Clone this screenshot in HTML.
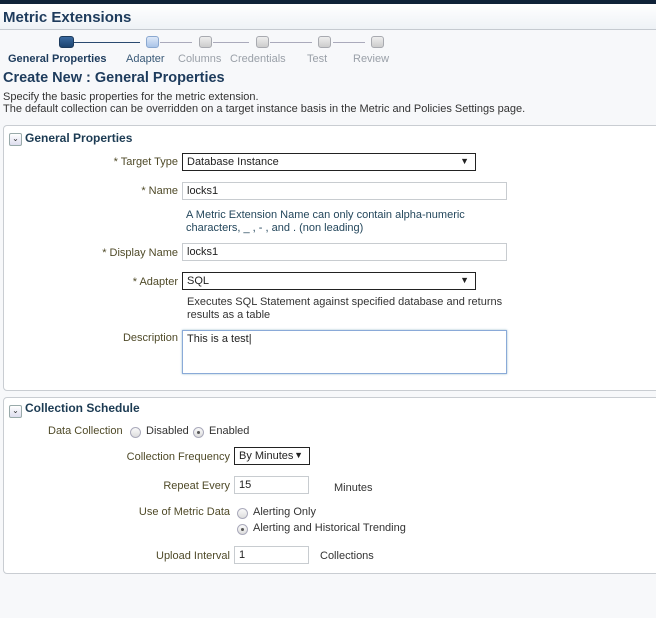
<!DOCTYPE html>
<html><head><style>
body{margin:0;width:656px;height:618px;background:#f7f8fa;font-family:"Liberation Sans",Arial,sans-serif;font-size:11px;color:#333;position:relative;overflow:hidden}
.a{position:absolute;white-space:nowrap}
.lbl{color:#4f4a28;text-align:right;margin-top:1px}
.help{color:#24475c;margin-top:1px}
.inp{position:absolute;background:#fff;border:1px solid #c8ccd0;box-sizing:border-box;height:18px;padding:2px 4px;color:#222}
.sel{position:absolute;background:#fff;border:1px solid #222;height:18px;box-sizing:border-box;padding:2px 4px;color:#222}
.sel:after{content:"\25BC";position:absolute;right:6px;top:2px;font-size:9px}
.panel{position:absolute;left:3px;right:-4px;border:1px solid #c9cdd2;border-radius:4px;background:#fff}
.ph{position:absolute;font-weight:bold;font-size:12px;color:#1c3b53}
.tog{position:absolute;width:11px;height:11px;border:1px solid #9aa;border-radius:2px;background:linear-gradient(#fff,#dde);font-size:8px;line-height:10px;text-align:center;color:#333}
.rad{position:absolute;width:11px;height:11px;border:1px solid #aab;border-radius:50%;background:linear-gradient(#fafafa,#ddd);box-sizing:border-box}
.rad.on:after{content:"";position:absolute;left:3px;top:3px;width:3px;height:3px;border-radius:50%;background:#555}
.dot{position:absolute;width:13px;height:12px;border-radius:3px;border:1px solid #a8aab0;background:linear-gradient(#eee,#ccc);box-sizing:border-box;top:36px}
.ln{position:absolute;height:1px;background:#aab;top:42px}
.st{position:absolute;top:53px;color:#9aa0a8;font-size:11px}
</style></head><body>
<div class="a" style="left:0;top:0;width:656px;height:4px;background:#0f2238"></div>
<div class="a" style="left:0;top:4px;width:656px;height:25px;background:linear-gradient(#fff,#eef2f6)"></div>
<div class="a" style="left:3px;top:9px;font-size:15px;font-weight:bold;color:#1d3b5c">Metric Extensions</div>
<div class="a" style="left:0;top:29px;width:656px;height:1px;background:#c5cad0"></div>

<div class="ln" style="left:72px;width:68px;background:#2a4a70"></div>
<div class="ln" style="left:160px;width:32px"></div>
<div class="ln" style="left:213px;width:36px"></div>
<div class="ln" style="left:270px;width:42px"></div>
<div class="ln" style="left:333px;width:32px"></div>
<div class="dot" style="left:59px;width:15px;background:linear-gradient(#3a6aa0,#1d4470);border-color:#1d3b5c"></div>
<div class="dot" style="left:146px;background:linear-gradient(#dde8f8,#aac4e8);border-color:#8aa8d0"></div>
<div class="dot" style="left:199px"></div>
<div class="dot" style="left:256px"></div>
<div class="dot" style="left:318px"></div>
<div class="dot" style="left:371px"></div>
<div class="st" style="left:8px;color:#1d3b5c;font-weight:bold">General Properties</div>
<div class="st" style="left:126px;color:#3a5a78">Adapter</div>
<div class="st" style="left:178px">Columns</div>
<div class="st" style="left:230px">Credentials</div>
<div class="st" style="left:307px">Test</div>
<div class="st" style="left:353px">Review</div>

<div class="a" style="left:3px;top:70px;font-size:14.5px;font-weight:bold;color:#1d3b5c">Create New : General Properties</div>
<div class="a" style="left:3px;top:91px;color:#333">Specify the basic properties for the metric extension.</div>
<div class="a" style="left:3px;top:103px;color:#333">The default collection can be overridden on a target instance basis in the Metric and Policies Settings page.</div>

<div class="panel" style="top:125px;height:264px"></div>
<div class="tog" style="left:9px;top:133px">&#8964;</div>
<div class="ph" style="left:25px;top:131px">General Properties</div>
<div class="a lbl" style="right:478px;top:155px">* Target Type</div>
<div class="sel" style="left:182px;top:153px;width:294px">Database Instance</div>
<div class="a lbl" style="right:478px;top:184px">* Name</div>
<div class="inp" style="left:182px;top:182px;width:325px">locks1</div>
<div class="a help" style="left:186px;top:208px">A Metric Extension Name can only contain alpha-numeric</div>
<div class="a help" style="left:186px;top:221px">characters, _ , - , and . (non leading)</div>
<div class="a lbl" style="right:478px;top:246px">* Display Name</div>
<div class="inp" style="left:182px;top:243px;width:325px">locks1</div>
<div class="a lbl" style="right:478px;top:275px">* Adapter</div>
<div class="sel" style="left:182px;top:272px;width:294px">SQL</div>
<div class="a" style="left:187px;top:296px">Executes SQL Statement against specified database and returns</div>
<div class="a" style="left:187px;top:309px">results as a table</div>
<div class="a lbl" style="right:478px;top:331px">Description</div>
<div class="inp" style="left:182px;top:330px;width:325px;height:44px;border:1px solid #8aaad8;box-shadow:0 0 2px #9bc">This is a test|</div>

<div class="panel" style="top:397px;height:175px"></div>
<div class="tog" style="left:9px;top:405px">&#8964;</div>
<div class="ph" style="left:25px;top:401px">Collection Schedule</div>
<div class="a lbl" style="left:48px;top:424px">Data Collection</div>
<div class="rad" style="left:130px;top:427px"></div>
<div class="a" style="left:146px;top:425px">Disabled</div>
<div class="rad on" style="left:193px;top:427px"></div>
<div class="a" style="left:209px;top:425px">Enabled</div>
<div class="a lbl" style="right:426px;top:450px">Collection Frequency</div>
<div class="sel" style="left:234px;top:447px;width:76px">By Minutes</div>
<div class="a lbl" style="right:426px;top:479px">Repeat Every</div>
<div class="inp" style="left:234px;top:476px;width:75px">15</div>
<div class="a" style="left:334px;top:482px">Minutes</div>
<div class="a lbl" style="right:426px;top:505px">Use of Metric Data</div>
<div class="rad" style="left:237px;top:508px"></div>
<div class="a" style="left:253px;top:506px">Alerting Only</div>
<div class="rad on" style="left:237px;top:524px"></div>
<div class="a" style="left:253px;top:522px">Alerting and Historical Trending</div>
<div class="a lbl" style="right:426px;top:549px">Upload Interval</div>
<div class="inp" style="left:234px;top:546px;width:75px">1</div>
<div class="a" style="left:320px;top:550px">Collections</div>
</body></html>
